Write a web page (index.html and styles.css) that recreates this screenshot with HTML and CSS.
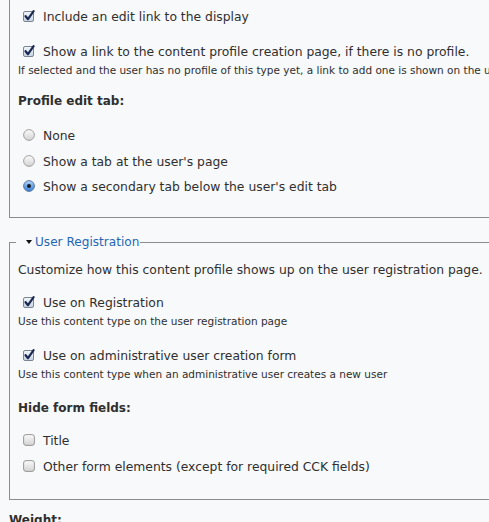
FILE: index.html
```html
<!DOCTYPE html>
<html>
<head>
<meta charset="utf-8">
<title>Content profile settings</title>
<link rel="stylesheet" href="styles.css">
</head>
<body>
<svg class="defs" width="0" height="0" aria-hidden="true">
  <defs>
    <linearGradient id="gChecked" x1="0" y1="0" x2="0" y2="1">
      <stop offset="0" stop-color="#f2f6fb"/>
      <stop offset="1" stop-color="#c6d3e4"/>
    </linearGradient>
    <linearGradient id="gPlain" x1="0" y1="0" x2="0" y2="1">
      <stop offset="0" stop-color="#fbfbfb"/>
      <stop offset="1" stop-color="#d2d2d2"/>
    </linearGradient>
    <linearGradient id="gRadioOn" x1="0" y1="0" x2="0" y2="1">
      <stop offset="0" stop-color="#b8d6f8"/>
      <stop offset="0.5" stop-color="#6fa6e6"/>
      <stop offset="1" stop-color="#3c80d6"/>
    </linearGradient>
  </defs>
</svg>
<div class="page">
  <fieldset class="fs fs-top">
    <div class="opt opt-first">
      <svg class="box" viewBox="0 0 12 12" width="12" height="12"><rect x="0.5" y="1.5" width="10" height="10" rx="1.5" fill="url(#gChecked)" stroke="#7b8594"/><path d="M2.6 6.2 L5 9.2 L10.6 1.2" fill="none" stroke="#1b2a50" stroke-width="2.2" stroke-linecap="round" stroke-linejoin="round"/></svg>
      <span>Include an edit link to the display</span>
    </div>
    <div class="opt opt-gap">
      <svg class="box" viewBox="0 0 12 12" width="12" height="12"><rect x="0.5" y="1.5" width="10" height="10" rx="1.5" fill="url(#gChecked)" stroke="#7b8594"/><path d="M2.6 6.2 L5 9.2 L10.6 1.2" fill="none" stroke="#1b2a50" stroke-width="2.2" stroke-linecap="round" stroke-linejoin="round"/></svg>
      <span>Show a link to the content profile creation page, if there is no profile.</span>
    </div>
    <div class="desc">If selected and the user has no profile of this type yet, a link to add one is shown on the user's page.</div>
    <div class="heading heading-a">Profile edit tab:</div>
    <div class="opt radio-first">
      <svg class="box" viewBox="0 0 12 12" width="12" height="12"><circle cx="6" cy="6" r="5.4" fill="url(#gPlain)" stroke="#9a9a9a" stroke-width="0.9"/></svg>
      <span>None</span>
    </div>
    <div class="opt radio-next">
      <svg class="box" viewBox="0 0 12 12" width="12" height="12"><circle cx="6" cy="6" r="5.4" fill="url(#gPlain)" stroke="#9a9a9a" stroke-width="0.9"/></svg>
      <span>Show a tab at the user's page</span>
    </div>
    <div class="opt radio-next">
      <svg class="box" viewBox="0 0 12 12" width="12" height="12"><circle cx="6" cy="6" r="5.4" fill="url(#gRadioOn)" stroke="#4d6f9c" stroke-width="0.9"/><circle cx="6" cy="6" r="2" fill="#141a24"/></svg>
      <span>Show a secondary tab below the user's edit tab</span>
    </div>
  </fieldset>

  <fieldset class="fs fs-reg">
    <legend class="legend"><span class="tri"></span><a class="legend-link" href="#">User Registration</a></legend>
    <div class="intro">Customize how this content profile shows up on the user registration page.</div>
    <div class="opt opt-reg">
      <svg class="box" viewBox="0 0 12 12" width="12" height="12"><rect x="0.5" y="1.5" width="10" height="10" rx="1.5" fill="url(#gChecked)" stroke="#7b8594"/><path d="M2.6 6.2 L5 9.2 L10.6 1.2" fill="none" stroke="#1b2a50" stroke-width="2.2" stroke-linecap="round" stroke-linejoin="round"/></svg>
      <span>Use on Registration</span>
    </div>
    <div class="desc">Use this content type on the user registration page</div>
    <div class="opt opt-admin">
      <svg class="box" viewBox="0 0 12 12" width="12" height="12"><rect x="0.5" y="1.5" width="10" height="10" rx="1.5" fill="url(#gChecked)" stroke="#7b8594"/><path d="M2.6 6.2 L5 9.2 L10.6 1.2" fill="none" stroke="#1b2a50" stroke-width="2.2" stroke-linecap="round" stroke-linejoin="round"/></svg>
      <span>Use on administrative user creation form</span>
    </div>
    <div class="desc">Use this content type when an administrative user creates a new user</div>
    <div class="heading heading-b">Hide form fields:</div>
    <div class="opt opt-title">
      <svg class="box" viewBox="0 0 12 12" width="12" height="12"><rect x="0.6" y="0.6" width="10.8" height="10.8" rx="2.4" fill="url(#gPlain)" stroke="#8e8e8e" stroke-width="0.9"/></svg>
      <span>Title</span>
    </div>
    <div class="opt radio-next">
      <svg class="box" viewBox="0 0 12 12" width="12" height="12"><rect x="0.6" y="0.6" width="10.8" height="10.8" rx="2.4" fill="url(#gPlain)" stroke="#8e8e8e" stroke-width="0.9"/></svg>
      <span>Other form elements (except for required CCK fields)</span>
    </div>
  </fieldset>

  <div class="heading weight">Weight:</div>
</div>
</body>
</html>
```

FILE: styles.css
```css
html, body {
  margin: 0;
  padding: 0;
  background: #f8f9fb;
  overflow: hidden;
}

.defs {
  position: absolute;
  width: 0;
  height: 0;
}

.page {
  padding-left: 9px;
  font-family: "DejaVu Sans", Verdana, sans-serif;
  color: #2f2f2f;
  font-size: 12.35px;
  line-height: 18px;
  width: 640px;
}

.fs {
  margin: 0;
  border: 1px solid #8c8c8c;
  padding: 0 0 0 8px;
  width: 600px;
  box-sizing: border-box;
  min-width: 0;
}

.fs-top {
  border-top: none;
  padding-bottom: 21px;
}

.fs-reg {
  margin-top: 16px;
  padding-top: 11px;
  padding-bottom: 23px;
}

.legend {
  margin-left: -2px;
  padding: 0 1px 0 10px;
  font-size: 12.1px;
  line-height: 16px;
  display: flex;
  align-items: center;
}

.tri {
  width: 0;
  height: 0;
  border-left: 3px solid transparent;
  border-right: 3px solid transparent;
  border-top: 4px solid #111;
  margin-right: 3px;
}

.legend-link {
  color: #1f67b6;
  text-decoration: none;
}

.opt {
  display: flex;
  align-items: center;
  gap: 8px;
  padding-left: 5px;
  white-space: nowrap;
}

.box {
  flex: none;
  margin-top: -2px;
}

.opt-first { margin-top: 8px; }
.opt-gap { margin-top: 17px; }

.desc {
  font-size: 10.5px;
  line-height: 14px;
  margin-top: 2px;
  white-space: nowrap;
}

.heading {
  font-weight: bold;
  font-size: 12px;
  line-height: 18px;
}

.heading-a { margin-top: 15px; }
.radio-first { margin-top: 17px; }
.radio-next { margin-top: 7.5px; }

.intro { white-space: nowrap; }
.opt-reg { margin-top: 15px; }
.opt-admin { margin-top: 19px; }
.heading-b { margin-top: 18px; }
.opt-title { margin-top: 15px; }

.weight {
  margin-top: 11px;
}
```
